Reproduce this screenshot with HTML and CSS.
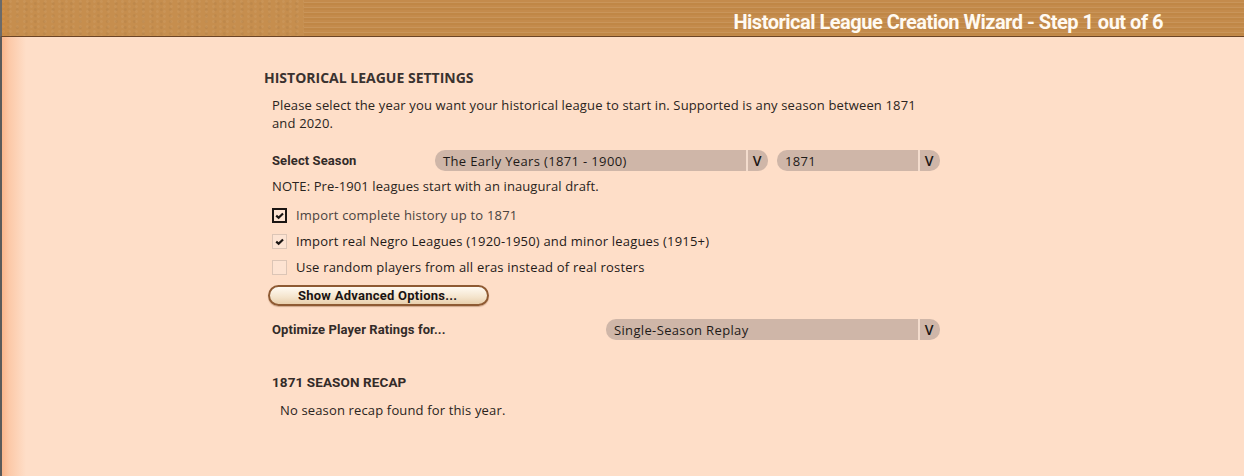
FILE: index.html
```html
<!DOCTYPE html>
<html>
<head>
<meta charset="utf-8">
<link rel="stylesheet" href="styles.css">
</head>
<body>
<div class="page">
  <div class="topbar">
    <div class="topbar-left"></div>
    <div class="topbar-right"><h1 class="title">Historical League Creation Wizard - Step 1 out of 6</h1></div>
  </div>
  <div class="content">
    <div class="edge"></div>
    <div class="panel">
      <h2 class="section-title">HISTORICAL LEAGUE SETTINGS</h2>
      <p class="intro">Please select the year you want your historical league to start in. Supported is any season between 1871 and 2020.</p>
      <div class="row season-row">
        <span class="label">Select Season</span>
        <div class="select era"><span class="select-text">The Early Years (1871 - 1900)</span><span class="select-arrow">V</span></div>
        <div class="select year"><span class="select-text">1871</span><span class="select-arrow">V</span></div>
      </div>
      <p class="note">NOTE: Pre-1901 leagues start with an inaugural draft.</p>
      <div class="checks">
        <label class="check"><span class="box box-focus"><svg viewBox="0 0 10 10" class="tick"><path d="M2 5.2 L4.2 7 L8.2 3.2" /></svg></span><span class="check-text">Import complete history up to 1871</span></label>
        <label class="check"><span class="box box-dim"><svg viewBox="0 0 10 10" class="tick"><path d="M2 5.2 L4.2 7 L8.2 3.2" /></svg></span><span class="check-text dark">Import real Negro Leagues (1920-1950) and minor leagues (1915+)</span></label>
        <label class="check"><span class="box box-dim"></span><span class="check-text dark">Use random players from all eras instead of real rosters</span></label>
      </div>
      <button class="adv-btn">Show Advanced Options...</button>
      <div class="row opt-row">
        <span class="label">Optimize Player Ratings for...</span>
        <div class="select mode"><span class="select-text">Single-Season Replay</span><span class="select-arrow">V</span></div>
      </div>
      <h3 class="recap-title">1871 SEASON RECAP</h3>
      <p class="recap-text">No season recap found for this year.</p>
    </div>
  </div>
</div>
</body>
</html>
```
FILE: styles.css
```css
html, body {
  margin: 0;
  padding: 0;
  width: 1244px;
  height: 476px;
  overflow: hidden;
  background: #fedec8;
  font-family: "Open Sans", "Noto Sans", sans-serif;
  color: #2a2420;
}
.page {
  display: flex;
  flex-direction: column;
  height: 476px;
}
.topbar {
  height: 36px;
  display: flex;
  border-bottom: 1px solid #6b4425;
  border-left: 2px solid #6a6a6a;
  box-sizing: content-box;
}
.topbar-left {
  width: 302px;
  background: #c68e4e;
  background-image:
    radial-gradient(circle at 20% 30%, rgba(255,255,255,0.05) 0 1px, transparent 2px),
    radial-gradient(circle at 70% 60%, rgba(0,0,0,0.04) 0 1px, transparent 2px),
    linear-gradient(90deg, #c9873e 0px, #c68e4e 8px, #c68e4e 100%);
  background-size: 7px 5px, 9px 6px, 100% 100%;
}
.topbar-right {
  flex: 1;
  display: flex;
  align-items: center;
  justify-content: flex-end;
  padding-right: 81px;
  background: #c48b4a;
  background-image: repeating-linear-gradient(180deg, #c48b4c 0 2px, #c9955a 2px 3px, #c08746 3px 5px);
}
.title {
  margin: 0;
  font-family: "Roboto", sans-serif;
  font-weight: 700;
  font-size: 20px;
  letter-spacing: -0.5px;
  color: #fffaf2;
  position: relative;
  top: 4px;
}
.content {
  flex: 1;
  display: flex;
  border-left: 2px solid #5a5a5a;
}
.edge {
  width: 24px;
  background: linear-gradient(90deg, #f9b68c 0%, #fcc9a8 30%, #fedec8 100%);
}
.panel {
  padding-left: 238px;
  padding-top: 32px;
  width: 690px;
}
.section-title {
  margin: 0;
  font-size: 14px;
  font-weight: 700;
  color: #3a3230;
  letter-spacing: 0px;
  line-height: 18px;
}
.intro {
  margin: 9px 0 0 8px;
  font-size: 13px;
  line-height: 18px;
  width: 668px;
  letter-spacing: 0.15px;
}
.row {
  display: flex;
  align-items: center;
  margin-left: 8px;
}
.season-row {
  margin-top: 18px;
}
.label {
  font-family: "Roboto", sans-serif;
  font-weight: 700;
  font-size: 13px;
  color: #332b28;
  letter-spacing: 0.1px;
}
.season-row .label {
  width: 163px;
}
.select {
  height: 21px;
  border-radius: 10px;
  background: #cfb6a8;
  display: flex;
  align-items: center;
  font-size: 13px;
  color: #1e1a18;
  overflow: hidden;
}
.select-text {
  flex: 1;
  padding-left: 8px;
  letter-spacing: 0.35px;
}
.select-arrow {
  width: 22px;
  height: 21px;
  border-left: 2px solid #f3dccd;
  display: flex;
  align-items: center;
  justify-content: center;
  font-family: "Open Sans", sans-serif;
  font-size: 14px;
  font-weight: 600;
  color: #1c1714;
  box-sizing: border-box;
  padding-right: 2px;
}
.era { width: 333px; }
.year { width: 163px; margin-left: 9px; }
.note {
  margin: 6px 0 0 8px;
  font-size: 13px;
  line-height: 18px;
  letter-spacing: 0.1px;
}
.checks {
  margin-top: 7px;
  display: flex;
  flex-direction: column;
}
.check {
  display: flex;
  align-items: center;
  margin-left: 8px;
  height: 26px;
}
.box {
  width: 15px;
  height: 15px;
  box-sizing: border-box;
  display: flex;
  align-items: center;
  justify-content: center;
  margin-right: 9px;
  background: #fde3d2;
}
.box-focus { border: 2px solid #1b1513; }
.box-dim { border: 1px solid #dcc5b6; }
.tick {
  width: 11px;
  height: 11px;
  fill: none;
  stroke: #1b1513;
  stroke-width: 2;
}
.check-text {
  font-size: 13px;
  color: #4a4340;
  letter-spacing: 0.2px;
}
.check-text.dark { color: #1f1a18; }
.adv-btn {
  margin: 5px 0 0 4px;
  width: 221px;
  height: 21px;
  border-radius: 11px;
  border: 2px solid #8e5a33;
  background: linear-gradient(180deg, #fffaf2 0%, #f4e4cc 60%, #e8cfad 100%);
  box-shadow: 0 1px 1px rgba(120,70,30,0.35);
  font-family: "Roboto", sans-serif;
  font-weight: 700;
  font-size: 13px;
  color: #1a1412;
  text-align: left;
  padding: 0 0 0 28px;
  letter-spacing: 0.25px;
  display: block;
}
.opt-row {
  margin-top: 13px;
}
.opt-row .label {
  width: 334px;
}
.mode { width: 334px; }
.recap-title {
  margin: 33px 0 0 8px;
  font-family: "Roboto", sans-serif;
  font-weight: 700;
  font-size: 13.5px;
  color: #332b28;
  letter-spacing: 0.1px;
  line-height: 18px;
}
.recap-text {
  margin: 10px 0 0 16px;
  font-size: 13px;
  line-height: 18px;
  letter-spacing: 0.15px;
}
```
